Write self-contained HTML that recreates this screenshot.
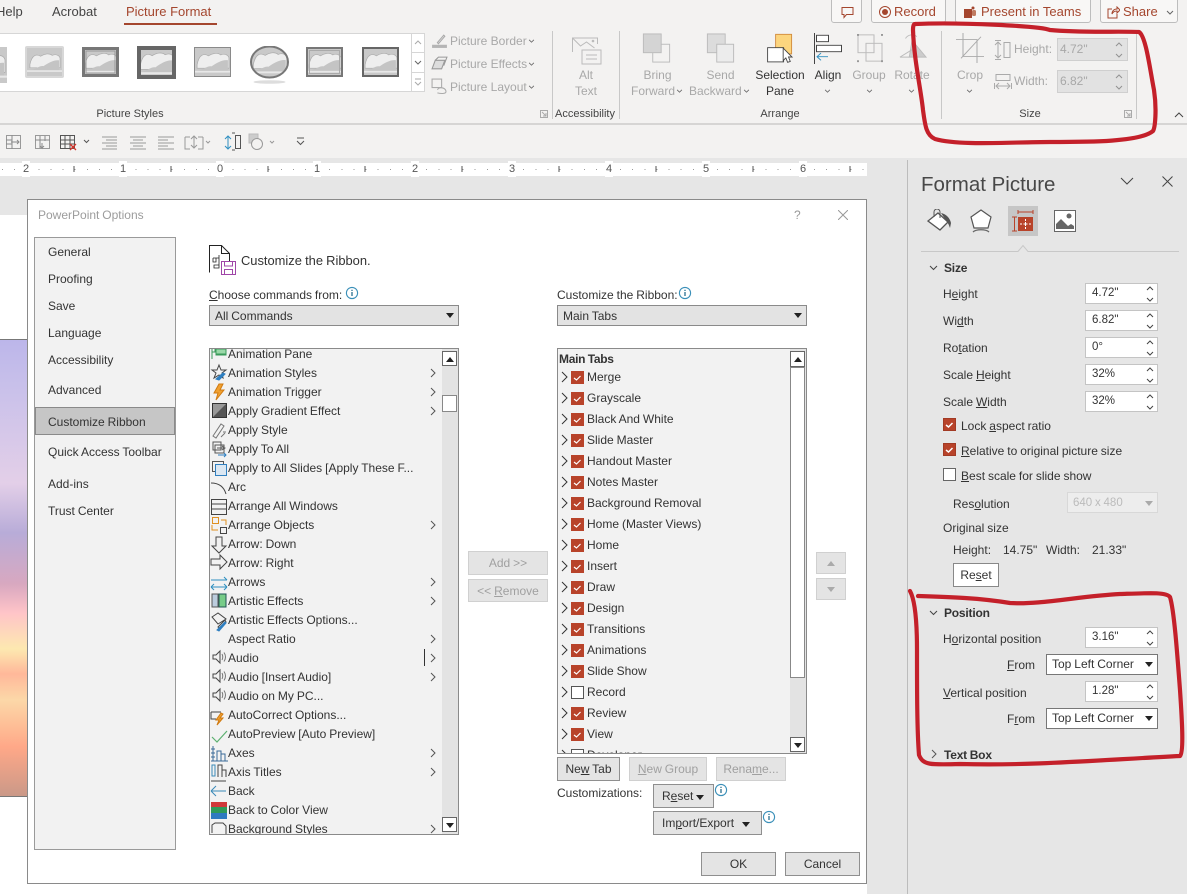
<!DOCTYPE html>
<html lang="en"><head><meta charset="utf-8"><title>Format Picture</title>
<style>
html,body{margin:0;padding:0;background:#e6e6e6}
#p{position:relative;width:1187px;height:894px;overflow:hidden;background:#e6e6e6;font:12px/16px "Liberation Sans",sans-serif;word-spacing:-.4px;color:#333}
#p div,#p svg.a{position:absolute}
.t{white-space:nowrap}
.g{color:#a8a8a8}
.c{text-align:center}
.btn{box-sizing:border-box;border:1px solid #8f8f8f;background:#e4e4e4;text-align:center;line-height:22px;white-space:nowrap}
.dis{box-sizing:border-box;border:1px solid #d0d0d0;background:#e4e4e4;color:#a0a0a0;text-align:center;line-height:22px;white-space:nowrap}
.top{box-sizing:border-box;border:1px solid #bdbdbd;border-radius:3px;background:#f8f7f6;color:#a4462e;font-size:13px;line-height:28px;white-space:nowrap;top:-3px;height:26px;word-spacing:0}
.inp{box-sizing:border-box;border:1px solid #c4c4c4;background:#fff;left:1085px;width:73px;height:21px;padding-left:6px;line-height:19px;font-size:11.5px}
.sel{box-sizing:border-box;border:1px solid #777;background:#fff;left:1046px;width:112px;height:21px;padding-left:5px;line-height:18px;font-size:12px;white-space:nowrap}
.ck{box-sizing:border-box;width:13px;height:13px;background:#b8432a;border:1px solid #a23a24}
.un{box-sizing:border-box;width:13px;height:13px;background:#fff;border:1px solid #666}
.sb{box-sizing:border-box;background:#fff;border:1px solid #666}
svg{display:block}
u{text-decoration-thickness:1px;text-underline-offset:1px}
</style></head><body>
<div id="p">
<svg width="0" height="0" style="position:absolute"><defs>
<symbol id="th" viewBox="0 0 36 34" preserveAspectRatio="none"><rect width="36" height="34" fill="#c9c9c9"/><path d="M3 20C5 8 10 7 14 10c4-3 9-4 12-1 4-2 7 0 8 3v12H3z" fill="#eee" stroke="#aaa" stroke-width=".7"/><path d="M3 27c6-1 10-6 14-5 5-4 11-8 16-7v12z" fill="#c4c4c4"/><rect y="27" width="36" height="2" fill="#e8e8e8"/></symbol>
<symbol id="chev" viewBox="0 0 6 10"><path d="M1 1l4 4-4 4" fill="none" stroke="#555" stroke-width="1"/></symbol>
<symbol id="dn" viewBox="0 0 8 5"><path d="M1 1l3 3 3-3" fill="none" stroke="#666" stroke-width="1"/></symbol>
<symbol id="tick" viewBox="0 0 13 13"><path d="M3 7l2.5 2 4-4" fill="none" stroke="#fff" stroke-width="1.5"/></symbol>
<symbol id="spin" viewBox="0 0 8 20"><path d="M1 6l3-3 3 3M1 14l3 3 3-3" fill="none" stroke="#444" stroke-width="1"/></symbol>
<symbol id="info" viewBox="0 0 14 14"><circle cx="7" cy="7" r="5.6" fill="#fff" stroke="#3a8fb8" stroke-width="1.1"/><path d="M7 6v4M7 3.8v1.2" stroke="#3a7a98" stroke-width="1.4"/></symbol>
<symbol id="tri" viewBox="0 0 8 5"><path d="M0 0h8L4 5z" fill="#222"/></symbol>
<symbol id="aud" viewBox="0 0 16 16"><path d="M1 6h3l4-4v12l-4-4H1z" fill="none" stroke="#444"/><path d="M10 5c1 2 1 4 0 6M12 3.500c2 3 2 6 0 9" fill="none" stroke="#777"/></symbol>
</defs></svg>

<!-- ribbon -->
<div style="left:0;top:0;width:1187px;height:123px;background:#f3f2f1"></div>
<div class="t" style="left:-4px;top:4px;font-size:13px;color:#444">Help</div>
<div class="t" style="left:52px;top:4px;font-size:13px;color:#444">Acrobat</div>
<div class="t" style="left:126px;top:4px;font-size:13px;color:#a4462e;word-spacing:0">Picture Format</div>
<div style="left:124px;top:23px;width:93px;height:2px;background:#a4462e"></div>

<div class="top" style="left:831px;width:31px"><svg class="a" style="left:8px;top:7px" width="15" height="15" viewBox="0 0 15 15"><path d="M2 2.500h11v7H6.500L4 12.500v-3H2z" fill="none" stroke="#a4462e"/></svg></div>
<div class="top" style="left:871px;width:75px;padding-left:22px"><svg class="a" style="left:6px;top:7px" width="14" height="14" viewBox="0 0 14 14"><circle cx="7" cy="7" r="5.500" fill="none" stroke="#a4462e"/><circle cx="7" cy="7" r="3" fill="#a4462e"/></svg>Record</div>
<div class="top" style="left:955px;width:136px;padding-left:25px"><svg class="a" style="left:7px;top:8px" width="14" height="14" viewBox="0 0 14 14"><rect x="1" y="3" width="8" height="9" fill="#a4462e"/><rect x="9" y="4" width="4" height="6" rx="1.500" fill="#c07a60"/><circle cx="10" cy="2" r="1.500" fill="#a4462e"/></svg>Present in Teams</div>
<div class="top" style="left:1100px;width:78px;padding-left:22px"><svg class="a" style="left:6px;top:8px" width="13" height="13" viewBox="0 0 13 13"><path d="M5 3H1v9h9V8M5 8c0-3 2-5 5-5V1l3 3-3 3V5c-2 0-4 1-5 3z" fill="none" stroke="#a4462e"/></svg>Share<svg class="a" style="left:65px;top:12px" width="8" height="5"><use href="#dn"/></svg></div>

<!-- gallery -->
<div style="left:-2px;top:33px;width:427px;height:59px;background:#fff;box-sizing:border-box;border:1px solid #d6d6d6"></div>
<div style="left:411px;top:33px;width:1px;height:59px;background:#d6d6d6"></div>
<div style="left:412px;top:52px;width:13px;height:1px;background:#d6d6d6"></div>
<div style="left:412px;top:72px;width:13px;height:1px;background:#d6d6d6"></div>
<svg class="a" style="left:414px;top:40px" width="8" height="5"><path d="M1 4l3-3 3 3" fill="none" stroke="#aaa"/></svg>
<svg class="a" style="left:414px;top:60px" width="8" height="5"><use href="#dn"/></svg>
<svg class="a" style="left:414px;top:78px" width="8" height="8"><path d="M1 1h6M1 4l3 3 3-3" fill="none" stroke="#aaa"/></svg>
<svg class="a" style="left:-2px;top:47px" width="9" height="36"><use href="#th" width="36" height="36" x="-27"/></svg>
<svg class="a" style="left:25px;top:46px" width="39" height="32"><rect width="39" height="32" rx="2" fill="#d8d8d8"/><use href="#th" width="35" height="28" x="2" y="2"/></svg>
<svg class="a" style="left:82px;top:47px" width="37" height="30"><use href="#th" width="37" height="30"/><rect x="1.500" y="1.500" width="34" height="27" fill="none" stroke="#777" stroke-width="3"/><rect x="4" y="4" width="29" height="22" fill="none" stroke="#999"/></svg>
<svg class="a" style="left:137px;top:46px" width="39" height="33"><use href="#th" width="39" height="33"/><rect x="2" y="2" width="35" height="29" fill="none" stroke="#666" stroke-width="4"/></svg>
<svg class="a" style="left:194px;top:47px" width="37" height="30"><use href="#th" width="37" height="30"/><rect x=".5" y=".5" width="36" height="29" fill="none" stroke="#8a8a8a"/></svg>
<svg class="a" style="left:250px;top:46px" width="39" height="38"><defs><clipPath id="el"><ellipse cx="19.500" cy="16" rx="18.500" ry="15.500"/></clipPath></defs><ellipse cx="19.500" cy="36" rx="16" ry="1.800" fill="#ddd"/><g clip-path="url(#el)"><use href="#th" width="39" height="32"/></g><ellipse cx="19.500" cy="16" rx="18.500" ry="15.500" fill="none" stroke="#777" stroke-width="2"/></svg>
<svg class="a" style="left:306px;top:47px" width="37" height="30"><use href="#th" width="37" height="30"/><rect x="1" y="1" width="35" height="28" fill="none" stroke="#777" stroke-width="2"/><rect x="3.500" y="3.500" width="30" height="23" fill="none" stroke="#aaa"/></svg>
<svg class="a" style="left:362px;top:47px" width="37" height="30"><use href="#th" width="37" height="30"/><rect x="1" y="1" width="35" height="28" fill="none" stroke="#666" stroke-width="2"/></svg>

<svg class="a" style="left:431px;top:32px" width="17" height="17" viewBox="0 0 16 16"><path d="M6 10l6-7 1 1-6 7z" fill="none" stroke="#aaa"/><rect x="1" y="12" width="14" height="3" fill="#b5b5b5"/></svg>
<svg class="a" style="left:431px;top:55px" width="17" height="17" viewBox="0 0 16 16"><path d="M4 5h9l-3 8H1z" fill="#ddd" stroke="#999"/><path d="M4 5l3-3h8l-3 8" fill="none" stroke="#999"/></svg>
<svg class="a" style="left:431px;top:78px" width="17" height="17" viewBox="0 0 16 16"><rect x="1" y="1" width="9" height="8" fill="none" stroke="#aaa"/><path d="M6 11c2-3 7-2 8 1s-4 3-8 2" fill="none" stroke="#aaa"/></svg>
<div class="t g" style="left:450px;top:33px;font-size:12px;word-spacing:0">Picture Border</div>
<div class="t g" style="left:450px;top:56px;font-size:12px;word-spacing:0">Picture Effects</div>
<div class="t g" style="left:450px;top:79px;font-size:12px;word-spacing:0">Picture Layout</div>
<svg class="a" style="left:528px;top:39px" width="7" height="4"><use href="#dn"/></svg>
<svg class="a" style="left:528px;top:62px" width="7" height="4"><use href="#dn"/></svg>
<svg class="a" style="left:528px;top:85px" width="7" height="4"><use href="#dn"/></svg>
<div class="t c" style="left:30px;top:106px;width:200px;font-size:11px;color:#444;word-spacing:0">Picture Styles</div>
<svg class="a" style="left:540px;top:110px" width="8" height="8"><rect x=".5" y=".5" width="7" height="7" fill="none" stroke="#aaa"/><path d="M2 2l4 4M6 3v3H3" fill="none" stroke="#aaa"/></svg>
<div style="left:552px;top:31px;width:1px;height:88px;background:#c8c8c8"></div>

<svg class="a" style="left:572px;top:36px" width="30" height="30" viewBox="0 0 30 30"><path d="M.5 16V2h25v6M.5 2l8 8 6-4 8 6" fill="none" stroke="#bbb"/><circle cx="21" cy="5" r="1.300" fill="#bbb"/><rect x="10" y="14" width="19" height="14" fill="none" stroke="#bbb"/><path d="M14 19h11M14 23h11" stroke="#bbb"/></svg>
<div class="t g c" style="left:566px;top:67px;width:40px;font-size:12px">Alt</div>
<div class="t g c" style="left:566px;top:83px;width:40px;font-size:12px">Text</div>
<div class="t c" style="left:554px;top:106px;width:62px;font-size:11px;color:#444">Accessibility</div>
<div style="left:619px;top:31px;width:1px;height:88px;background:#c8c8c8"></div>

<svg class="a" style="left:642px;top:33px" width="29" height="30" viewBox="0 0 30 32"><rect x="11" y="12" width="18" height="19" fill="#f3f2f1" stroke="#bbb"/><rect x="1" y="1" width="19" height="20" fill="#d4d4d4" stroke="#bbb"/></svg>
<div class="t g c" style="left:630px;top:67px;width:55px;font-size:12px">Bring</div>
<div class="t g" style="left:631px;top:83px;font-size:12px">Forward</div>
<svg class="a" style="left:676px;top:89px" width="7" height="4"><use href="#dn"/></svg>
<svg class="a" style="left:706px;top:33px" width="29" height="30" viewBox="0 0 30 32"><rect x="1" y="1" width="19" height="20" fill="#dcdcdc" stroke="#bbb"/><rect x="11" y="12" width="18" height="19" fill="#ececec" stroke="#bbb"/></svg>
<div class="t g c" style="left:693px;top:67px;width:55px;font-size:12px">Send</div>
<div class="t g" style="left:689px;top:83px;font-size:12px">Backward</div>
<svg class="a" style="left:743px;top:89px" width="7" height="4"><use href="#dn"/></svg>
<svg class="a" style="left:765px;top:33px" width="31" height="32" viewBox="0 0 32 36"><rect x="10.500" y="1.500" width="18" height="22" fill="#fcd57e" stroke="#d08a3c"/><rect x="1.500" y="16.500" width="18" height="16" fill="#fff" stroke="#444"/><path d="M19 17v14l3-3 2 5 3-1-2-5h4z" fill="#fff" stroke="#444"/></svg>
<div class="t c" style="left:752px;top:67px;width:56px;font-size:12px">Selection</div>
<div class="t c" style="left:752px;top:83px;width:56px;font-size:12px">Pane</div>
<svg class="a" style="left:814px;top:33px" width="28" height="31" viewBox="0 0 28 34" preserveAspectRatio="none"><path d="M.5 0v34" stroke="#444"/><rect x="2.500" y="2.500" width="12" height="7" fill="#fff" stroke="#444"/><rect x="2.500" y="13.500" width="25" height="7" fill="#fff" stroke="#444"/><path d="M14 26H3m4-4l-4 4 4 4" fill="none" stroke="#2f8fc0"/></svg>
<div class="t c" style="left:810px;top:67px;width:36px;font-size:12px">Align</div>
<svg class="a" style="left:824px;top:89px" width="7" height="4"><use href="#dn"/></svg>
<svg class="a" style="left:856px;top:33px" width="28" height="30" viewBox="0 0 28 32" preserveAspectRatio="none"><rect x="2" y="2" width="16" height="19" fill="none" stroke="#bbb"/><rect x="10" y="11" width="16" height="19" fill="none" stroke="#bbb"/><path d="M1 1h2v2H1zM25 1h2v2h-2zM1 29h2v2H1zM25 29h2v2h-2z" fill="#999"/></svg>
<div class="t g c" style="left:849px;top:67px;width:40px;font-size:12px">Group</div>
<svg class="a" style="left:866px;top:89px" width="7" height="4"><use href="#dn"/></svg>
<svg class="a" style="left:897px;top:31px" width="32" height="28" viewBox="0 0 32 30"><path d="M15 10l15 18H12z" fill="#ccc" stroke="#bbb"/><path d="M2 28l13-8M8 8a8 8 0 0 1 12-2M2 28h10" fill="none" stroke="#bbb"/></svg>
<div class="t g c" style="left:891px;top:67px;width:42px;font-size:12px">Rotate</div>
<svg class="a" style="left:908px;top:89px" width="7" height="4"><use href="#dn"/></svg>
<div class="t c" style="left:750px;top:106px;width:60px;font-size:11px;color:#444">Arrange</div>
<div style="left:941px;top:31px;width:1px;height:88px;background:#c8c8c8"></div>

<svg class="a" style="left:956px;top:33px" width="28" height="30" viewBox="0 0 28 32" preserveAspectRatio="none"><path d="M7 0v25h21M0 7h21v25M5 27L25 4" fill="none" stroke="#aaa"/></svg>
<div class="t g c" style="left:950px;top:67px;width:40px;font-size:12px">Crop</div>
<svg class="a" style="left:966px;top:89px" width="7" height="4"><use href="#dn"/></svg>
<svg class="a" style="left:994px;top:40px" width="18" height="20" viewBox="0 0 18 20"><path d="M4 2v16M1 5l3-3 3 3M1 15l3 3 3-3M1 .5h6M1 19.500h6" fill="none" stroke="#aaa"/><rect x="10" y="2.500" width="6" height="15" fill="none" stroke="#aaa"/></svg>
<svg class="a" style="left:994px;top:73px" width="18" height="18" viewBox="0 0 18 18"><rect x="2" y="1.500" width="14" height="6" fill="none" stroke="#aaa"/><path d="M2 13h14M5 10l-3 3 3 3M13 10l3 3-3 3M.5 10v6M17.500 10v6" fill="none" stroke="#aaa"/></svg>
<div class="t g" style="left:1014px;top:41px;font-size:12px">Height:</div>
<div class="t g" style="left:1014px;top:73px;font-size:12px">Width:</div>
<div style="left:1057px;top:38px;width:71px;height:23px;background:#e2e2e2;box-sizing:border-box;border:1px solid #cfcfcf"></div>
<div style="left:1057px;top:70px;width:71px;height:23px;background:#e2e2e2;box-sizing:border-box;border:1px solid #cfcfcf"></div>
<div class="t g" style="left:1060px;top:41px;font-size:12px">4.72"</div>
<div class="t g" style="left:1060px;top:73px;font-size:12px">6.82"</div>
<svg class="a" style="left:1115px;top:40px;opacity:.5" width="8" height="20"><use href="#spin"/></svg>
<svg class="a" style="left:1115px;top:72px;opacity:.5" width="8" height="20"><use href="#spin"/></svg>
<div class="t c" style="left:1000px;top:106px;width:60px;font-size:11px;color:#444">Size</div>
<svg class="a" style="left:1124px;top:110px" width="8" height="8"><rect x=".5" y=".5" width="7" height="7" fill="none" stroke="#aaa"/><path d="M2 2l4 4M6 3v3H3" fill="none" stroke="#aaa"/></svg>
<div style="left:1136px;top:31px;width:1px;height:88px;background:#c8c8c8"></div>
<svg class="a" style="left:1174px;top:112px" width="10" height="6"><path d="M1 5l4-4 4 4" fill="none" stroke="#444"/></svg>
<div style="left:0;top:123px;width:1187px;height:2px;background:#d6d5d4"></div>

<!-- QAT -->
<div style="left:0;top:125px;width:1187px;height:33px;background:#f3f2f1"></div>
<svg class="a" style="left:0;top:132px" width="310" height="20" viewBox="0 0 310 20" fill="none" stroke="#999">
<rect x="6.500" y="3.500" width="14" height="13"/><path d="M6 8h6M6 12h6M12 3v14M11 10h8m-2-2l2 2-2 2" stroke="#8a8a8a"/>
<rect x="35.500" y="3.500" width="14" height="13"/><path d="M35 8h15M40 4v12M45 4v5M42 11v5l-2-2m2 2l2-2" stroke="#8a8a8a"/>
<rect x="60.500" y="3.500" width="14" height="13" stroke="#555"/><path d="M60 8h15M60 12h15M65 4v12M70 4v12" stroke="#555"/><path d="M70 12l6 6m0-6l-6 6" stroke="#d4342a" stroke-width="1.300"/>
<path d="M84 8l2.500 2.500L89 8" stroke="#555"/>
<path d="M102 5h15M106 8h11M102 11h15M106 14h11M102 17h15"/>
<path d="M130 5h16M133 8h10M130 11h16M133 14h10M130 17h16"/>
<path d="M158 5h16M158 8h10M158 11h16M158 14h10M158 17h16"/>
<path d="M185 5h5M198 5h5M185 5v12h5M198 17h5V5M194 4v12M191 7l3-3 3 3M191 13l3 3 3-3M206 9l2 2 2-2"/>
<path d="M228 4v13M225 7l3-3 3 3M225 14l3 3 3-3" stroke="#2f8fc0"/><rect x="235.500" y="3.500" width="5" height="13" stroke="#555"/><path d="M232 1h3M232 18h3" stroke="#555"/>
<rect x="249" y="2" width="9" height="9" fill="#ccc" stroke="#bbb"/><circle cx="257" cy="12" r="5.500" fill="#f3f2f1"/><path d="M270 9l2 2 2-2"/>
<path d="M297 6h7M297 9l3.500 3.500L304 9" stroke="#555"/>
</svg>
<div style="left:0;top:158px;width:1187px;height:5px;background:#e6e6e6"></div>

<!-- ruler -->
<div style="left:0;top:163px;width:867px;height:13px;background:#fff"></div>
<div style="left:0;top:169px;width:867px;height:1px;background:repeating-linear-gradient(90deg,#999 0 1px,transparent 1px 12.12px);background-position:2px 0"></div>
<div class="t" style="left:22px;top:161px;font-size:11px;background:#fff;padding:0 1px;color:#555">2</div>
<div class="t" style="left:119px;top:161px;font-size:11px;background:#fff;padding:0 1px;color:#555">1</div>
<div class="t" style="left:216px;top:161px;font-size:11px;background:#fff;padding:0 1px;color:#555">0</div>
<div class="t" style="left:313px;top:161px;font-size:11px;background:#fff;padding:0 1px;color:#555">1</div>
<div class="t" style="left:411px;top:161px;font-size:11px;background:#fff;padding:0 1px;color:#555">2</div>
<div class="t" style="left:508px;top:161px;font-size:11px;background:#fff;padding:0 1px;color:#555">3</div>
<div class="t" style="left:605px;top:161px;font-size:11px;background:#fff;padding:0 1px;color:#555">4</div>
<div class="t" style="left:702px;top:161px;font-size:11px;background:#fff;padding:0 1px;color:#555">5</div>
<div class="t" style="left:799px;top:161px;font-size:11px;background:#fff;padding:0 1px;color:#555">6</div>
<svg class="a" style="left:0;top:166px" width="867" height="7"><path d="M74 0v6M171 0v6M268 0v6M365 0v6M462 0v6M559 0v6M656 0v6M753 0v6M850 0v6" stroke="#555"/></svg>

<!-- slide -->
<div style="left:0;top:215px;width:867px;height:679px;background:#fff"></div>
<div style="left:0;top:339px;width:30px;height:458px;box-sizing:border-box;border-top:1px solid #777;border-bottom:1px solid #777;background:linear-gradient(180deg,#bcb6ea 0,#c8c0ea 45px,#e3cfe8 143px,#b8acd8 193px,#d8a8c0 244px,#ffc4c8 273px,#fde8b0 309px,#ffb89a 334px,#fcd8a8 360px,#ffa888 407px,#c89888 458px)"></div>

<!-- dialog -->
<div style="left:27px;top:199px;width:840px;height:685px;box-sizing:border-box;background:#fff;border:1px solid #8a8a8a"></div>
<div class="t" style="left:38px;top:207px;color:#9c9c9c;font-size:12px">PowerPoint Options</div>
<div class="t" style="left:794px;top:207px;color:#999;font-size:12px">?</div>
<svg class="a" style="left:838px;top:210px" width="10" height="10"><path d="M0 0l10 10M10 0L0 10" stroke="#999"/></svg>

<div style="left:34px;top:237px;width:142px;height:613px;box-sizing:border-box;background:#f2f2f2;border:1px solid #9a9a9a"></div>
<div style="left:35px;top:407px;width:140px;height:28px;background:#c6c6c6;box-sizing:border-box;border:1px solid #8a8a8a"></div>
<div class="t" style="left:48px;top:244px">General</div>
<div class="t" style="left:48px;top:271px">Proofing</div>
<div class="t" style="left:48px;top:298px">Save</div>
<div class="t" style="left:48px;top:325px">Language</div>
<div class="t" style="left:48px;top:352px">Accessibility</div>
<div class="t" style="left:48px;top:382px">Advanced</div>
<div class="t" style="left:48px;top:414px">Customize Ribbon</div>
<div class="t" style="left:48px;top:444px">Quick Access Toolbar</div>
<div class="t" style="left:48px;top:476px">Add-ins</div>
<div class="t" style="left:48px;top:503px">Trust Center</div>

<svg class="a" style="left:209px;top:245px" width="28" height="31" viewBox="0 0 28 31"><path d="M.5 27.500V.5h12l8 8v8M12.500.5v8h8" fill="none" stroke="#222"/><path d="M10 10v13M4 13h6M4 13v4h3v-4M5 20h5v3H5z" fill="none" stroke="#222" stroke-width=".8"/><rect x="12.500" y="16.500" width="14" height="13" fill="#fff" stroke="#a046a8"/><path d="M15.500 17v4h8v-4M15.500 29.500v-5h8v5" fill="none" stroke="#a046a8"/></svg>
<div class="t" style="left:241px;top:253px;font-size:12.9px">Customize the Ribbon.</div>

<div class="t" style="left:209px;top:287px"><u>C</u>hoose commands from:</div>
<svg class="a" style="left:345px;top:286px" width="14" height="14"><use href="#info"/></svg>
<div style="left:209px;top:305px;width:250px;height:21px;box-sizing:border-box;background:#e3e3e3;border:1px solid #8a8a8a"></div>
<div class="t" style="left:215px;top:308px">All Commands</div>
<svg class="a" style="left:446px;top:313px" width="8" height="5"><use href="#tri"/></svg>

<div class="t" style="left:557px;top:287px">Customize the Ribbon:</div>
<svg class="a" style="left:678px;top:286px" width="14" height="14"><use href="#info"/></svg>
<div style="left:557px;top:305px;width:250px;height:21px;box-sizing:border-box;background:#e3e3e3;border:1px solid #8a8a8a"></div>
<div class="t" style="left:563px;top:308px">Main Tabs</div>
<svg class="a" style="left:794px;top:313px" width="8" height="5"><use href="#tri"/></svg>

<!-- left list -->
<div style="left:209px;top:348px;width:250px;height:487px;box-sizing:border-box;background:#f2f2f2;border:1px solid #8a8a8a;overflow:hidden">
<div style="left:232px;top:0;width:16px;height:485px;background:#e3e3e3"></div>
<div class="t" style="left:18px;top:-3px">Animation Pane</div>
<div class="t" style="left:18px;top:16px">Animation Styles</div>
<div class="t" style="left:18px;top:35px">Animation Trigger</div>
<div class="t" style="left:18px;top:54px">Apply Gradient Effect</div>
<div class="t" style="left:18px;top:73px">Apply Style</div>
<div class="t" style="left:18px;top:92px">Apply To All</div>
<div class="t" style="left:18px;top:111px">Apply to All Slides [Apply These F...</div>
<div class="t" style="left:18px;top:130px">Arc</div>
<div class="t" style="left:18px;top:149px">Arrange All Windows</div>
<div class="t" style="left:18px;top:168px">Arrange Objects</div>
<div class="t" style="left:18px;top:187px">Arrow: Down</div>
<div class="t" style="left:18px;top:206px">Arrow: Right</div>
<div class="t" style="left:18px;top:225px">Arrows</div>
<div class="t" style="left:18px;top:244px">Artistic Effects</div>
<div class="t" style="left:18px;top:263px">Artistic Effects Options...</div>
<div class="t" style="left:18px;top:282px">Aspect Ratio</div>
<div class="t" style="left:18px;top:301px">Audio</div>
<div class="t" style="left:18px;top:320px">Audio [Insert Audio]</div>
<div class="t" style="left:18px;top:339px">Audio on My PC...</div>
<div class="t" style="left:18px;top:358px">AutoCorrect Options...</div>
<div class="t" style="left:18px;top:377px">AutoPreview [Auto Preview]</div>
<div class="t" style="left:18px;top:396px">Axes</div>
<div class="t" style="left:18px;top:415px">Axis Titles</div>
<div class="t" style="left:18px;top:434px">Back</div>
<div class="t" style="left:18px;top:453px">Back to Color View</div>
<div class="t" style="left:18px;top:472px">Background Styles</div>

<svg class="a" style="left:0;top:0" width="18" height="486" viewBox="0 0 18 486" fill="none" stroke="#444">
<path d="M2 0v10M2 3h3v-3M6 1h10v5H6z" stroke="#3a9a5a"/><rect x="6" y="0" width="10" height="5" fill="#9ad8a8" stroke="#3a9a5a"/>
<path d="M9 16l2 5h5l-4 3 1 5-4-3-5 3 2-5-4-3h5z"/><path d="M6 30l7-6 2 1-6 6z" fill="#2f7fc0" stroke="#2f7fc0"/>
<path d="M9 35l-5 9h4l-2 7 8-10h-4l3-6z" fill="#f0a030" stroke="#d07a10"/>
<rect x="2.500" y="54.500" width="14" height="14" fill="#999" stroke="#333"/><path d="M3 68L16 55v13z" fill="#555" stroke="none"/>
<path d="M3 87l8-12 3 2-8 12zM13 83l3 0M11 88l4-4" stroke="#777"/>
<path d="M3 93h8v8H3zM5 96h9v8H5zM7 99h8M12 97l3 2-3 2" stroke="#555"/><path d="M8 106h8m-2-2l2 2-2 2" stroke="#2f7fc0"/>
<rect x="2.500" y="112.500" width="11" height="10" stroke="#555"/><rect x="5.500" y="115.500" width="11" height="11" fill="#dbe7f2" stroke="#2f7fc0"/>
<path d="M1 134c8 0 13 4 15 11"/>
<rect x="1.500" y="150.500" width="15" height="15"/><path d="M1 155h16M1 160h16"/>
<rect x="2.500" y="168.500" width="6" height="6" stroke="#e09020"/><rect x="10.500" y="178.500" width="6" height="6"/><path d="M11 171h5v5M8 181H2v-5" stroke="#e09020"/>
<path d="M6 188v9H2l7 7 7-7h-4v-9z"/>
<path d="M1 210h9v-4l7 7-7 7v-4H1z"/>
<path d="M1 231h16m-3-3l3 3M1 238h16M1 238l3-3m0 6l-3-3m16 0l-3-3m0 6l3-3" stroke="#2f8fc0"/>
<rect x="2" y="245" width="6" height="13" fill="#bcd" stroke="#555"/><rect x="9" y="245" width="7" height="13" fill="#7c8" stroke="#255"/>
<path d="M2 268l6-4 8 6-8 5zM8 278l7-7 1 2-6 7z" stroke="#444"/><path d="M7 281l8-8 1 1-7 8z" fill="#2f7fc0" stroke="#2f7fc0"/>
<path d="M1 363h10M1 363v7h5"/><path d="M11 364l-5 7h3l-2 5 6-7h-3l3-4z" fill="#f0a030" stroke="#d07a10"/>
<path d="M2 388l5 5 10-11" stroke="#5cb070" stroke-width="1.200"/>
<path d="M3 397v15M1 400h4M1 404h4M1 408h4M1 412h17M7 412v-10h4v10M11 412v-7h4v7" stroke="#3a6a98"/>
<rect x="2" y="416" width="3" height="11" stroke="#3a8ab8"/><path d="M8 428v-12h4v12M12 428v-7h4v7M1 432h15" stroke="#444"/>
<path d="M1 442h15M1 442l5-5M1 442l5 5" stroke="#3a8ab8"/>
<rect x="1" y="453" width="16" height="5" fill="#d0383a" stroke="none"/><rect x="1" y="458" width="16" height="6" fill="#2f9a5a" stroke="none"/><rect x="1" y="464" width="16" height="6" fill="#2f7ac0" stroke="none"/>
<path d="M2 484v-8l3-2h8l3 3v9"/>
</svg>
<svg class="a" style="left:2px;top:300px" width="16" height="16"><use href="#aud"/></svg>
<svg class="a" style="left:2px;top:319px" width="16" height="16"><use href="#aud"/></svg>
<svg class="a" style="left:2px;top:338px" width="16" height="16"><use href="#aud"/></svg>
<svg class="a" style="left:220px;top:19px" width="6" height="10"><use href="#chev"/></svg>
<svg class="a" style="left:220px;top:38px" width="6" height="10"><use href="#chev"/></svg>
<svg class="a" style="left:220px;top:57px" width="6" height="10"><use href="#chev"/></svg>
<svg class="a" style="left:220px;top:171px" width="6" height="10"><use href="#chev"/></svg>
<svg class="a" style="left:220px;top:228px" width="6" height="10"><use href="#chev"/></svg>
<svg class="a" style="left:220px;top:247px" width="6" height="10"><use href="#chev"/></svg>
<svg class="a" style="left:220px;top:285px" width="6" height="10"><use href="#chev"/></svg>
<svg class="a" style="left:220px;top:304px" width="6" height="10"><use href="#chev"/></svg>
<svg class="a" style="left:220px;top:323px" width="6" height="10"><use href="#chev"/></svg>
<svg class="a" style="left:220px;top:399px" width="6" height="10"><use href="#chev"/></svg>
<svg class="a" style="left:220px;top:418px" width="6" height="10"><use href="#chev"/></svg>
<svg class="a" style="left:220px;top:475px" width="6" height="10"><use href="#chev"/></svg>
<div style="left:214px;top:300px;width:1px;height:17px;background:#333"></div>
<div class="sb" style="left:232px;top:2px;width:15px;height:15px"><svg class="a" style="left:3px;top:5px" width="8" height="5"><path d="M0 5h8L4 0z" fill="#222"/></svg></div>
<div style="left:232px;top:46px;width:15px;height:17px;box-sizing:border-box;background:#fff;border:1px solid #888"></div>
<div class="sb" style="left:232px;top:468px;width:15px;height:15px"><svg class="a" style="left:3px;top:5px" width="8" height="5"><use href="#tri"/></svg></div>
</div>

<!-- add / remove -->
<div class="dis" style="left:468px;top:551px;width:80px;height:24px">Add &gt;&gt;</div>
<div class="dis" style="left:468px;top:579px;width:80px;height:23px">&lt;&lt; <u>R</u>emove</div>
<div class="dis" style="left:816px;top:552px;width:30px;height:22px"><svg class="a" style="left:10px;top:8px" width="8" height="5"><path d="M0 5h8L4 0z" fill="#aaa"/></svg></div>
<div class="dis" style="left:816px;top:578px;width:30px;height:22px"><svg class="a" style="left:10px;top:8px" width="8" height="5"><path d="M0 0h8L4 5z" fill="#aaa"/></svg></div>

<!-- right list -->
<div style="left:557px;top:348px;width:250px;height:406px;box-sizing:border-box;background:#f2f2f2;border:1px solid #8a8a8a;overflow:hidden">
<div class="t" style="left:1px;top:2px;font-weight:bold;letter-spacing:-.3px">Main Tabs</div>
<div class="t" style="left:29px;top:20px">Merge</div>
<div class="t" style="left:29px;top:41px">Grayscale</div>
<div class="t" style="left:29px;top:62px">Black And White</div>
<div class="t" style="left:29px;top:83px">Slide Master</div>
<div class="t" style="left:29px;top:104px">Handout Master</div>
<div class="t" style="left:29px;top:125px">Notes Master</div>
<div class="t" style="left:29px;top:146px">Background Removal</div>
<div class="t" style="left:29px;top:167px">Home (Master Views)</div>
<div class="t" style="left:29px;top:188px">Home</div>
<div class="t" style="left:29px;top:209px">Insert</div>
<div class="t" style="left:29px;top:230px">Draw</div>
<div class="t" style="left:29px;top:251px">Design</div>
<div class="t" style="left:29px;top:272px">Transitions</div>
<div class="t" style="left:29px;top:293px">Animations</div>
<div class="t" style="left:29px;top:314px">Slide Show</div>
<div class="t" style="left:29px;top:335px">Record</div>
<div class="t" style="left:29px;top:356px">Review</div>
<div class="t" style="left:29px;top:377px">View</div>
<div class="t" style="left:29px;top:398px">Developer</div>
<svg class="a" style="left:0;top:0" width="30" height="404" viewBox="0 0 30 404">
<path d="M4 23l5 5-5 5M4 44l5 5-5 5M4 65l5 5-5 5M4 86l5 5-5 5M4 107l5 5-5 5M4 128l5 5-5 5M4 149l5 5-5 5M4 170l5 5-5 5M4 191l5 5-5 5M4 212l5 5-5 5M4 233l5 5-5 5M4 254l5 5-5 5M4 275l5 5-5 5M4 296l5 5-5 5M4 317l5 5-5 5M4 338l5 5-5 5M4 359l5 5-5 5M4 380l5 5-5 5M4 401l5 5-5 5" fill="none" stroke="#333"/>
<g id="cks" fill="#b8432a"><rect x="13" y="22" width="13" height="13"/><rect x="13" y="43" width="13" height="13"/><rect x="13" y="64" width="13" height="13"/><rect x="13" y="85" width="13" height="13"/><rect x="13" y="106" width="13" height="13"/><rect x="13" y="127" width="13" height="13"/><rect x="13" y="148" width="13" height="13"/><rect x="13" y="169" width="13" height="13"/><rect x="13" y="190" width="13" height="13"/><rect x="13" y="211" width="13" height="13"/><rect x="13" y="232" width="13" height="13"/><rect x="13" y="253" width="13" height="13"/><rect x="13" y="274" width="13" height="13"/><rect x="13" y="295" width="13" height="13"/><rect x="13" y="316" width="13" height="13"/><rect x="13" y="358" width="13" height="13"/><rect x="13" y="379" width="13" height="13"/></g>
<rect x="13.500" y="337.500" width="12" height="12" fill="#fff" stroke="#555"/><rect x="13.500" y="400.500" width="12" height="12" fill="#fff" stroke="#555"/>
<path d="M16 29l2.500 2 4-4M16 50l2.500 2 4-4M16 71l2.500 2 4-4M16 92l2.500 2 4-4M16 113l2.500 2 4-4M16 134l2.500 2 4-4M16 155l2.500 2 4-4M16 176l2.500 2 4-4M16 197l2.500 2 4-4M16 218l2.500 2 4-4M16 239l2.500 2 4-4M16 260l2.500 2 4-4M16 281l2.500 2 4-4M16 302l2.500 2 4-4M16 323l2.500 2 4-4M16 365l2.500 2 4-4M16 386l2.500 2 4-4" fill="none" stroke="#fff" stroke-width="1.200"/>
</svg>
<div style="left:232px;top:0;width:16px;height:404px;background:#e3e3e3"></div>
<div class="sb" style="left:232px;top:2px;width:15px;height:16px"><svg class="a" style="left:3px;top:5px" width="8" height="5"><path d="M0 5h8L4 0z" fill="#222"/></svg></div>
<div style="left:232px;top:18px;width:15px;height:311px;box-sizing:border-box;background:#fff;border:1px solid #888"></div>
<div class="sb" style="left:232px;top:388px;width:15px;height:15px"><svg class="a" style="left:3px;top:5px" width="8" height="5"><use href="#tri"/></svg></div>
</div>

<div class="btn" style="left:557px;top:757px;width:63px;height:24px">Ne<u>w</u> Tab</div>
<div class="dis" style="left:629px;top:757px;width:78px;height:24px"><u>N</u>ew Group</div>
<div class="dis" style="left:716px;top:757px;width:70px;height:24px">Rena<u>m</u>e...</div>
<div class="t" style="left:557px;top:785px">Customizations:</div>
<div class="btn" style="left:653px;top:784px;width:61px;height:24px;text-align:left;padding-left:8px;line-height:23px">R<u>e</u>set<svg class="a" style="left:42px;top:10px" width="8" height="5"><use href="#tri"/></svg></div>
<svg class="a" style="left:714px;top:783px" width="14" height="14"><use href="#info"/></svg>
<div class="btn" style="left:653px;top:811px;width:109px;height:24px;text-align:left;padding-left:8px;line-height:23px">Im<u>p</u>ort/Export<svg class="a" style="left:88px;top:10px" width="8" height="5"><use href="#tri"/></svg></div>
<svg class="a" style="left:762px;top:810px" width="14" height="14"><use href="#info"/></svg>
<div class="btn" style="left:701px;top:852px;width:75px;height:24px">OK</div>
<div class="btn" style="left:785px;top:852px;width:75px;height:24px">Cancel</div>

<!-- panel -->
<div style="left:907px;top:160px;width:280px;height:734px;background:#e6e6e6;box-sizing:border-box;border-left:1px solid #bcbcbc"></div>
<div class="t" style="left:921px;top:172px;font-size:20.5px;line-height:26px;color:#484848;word-spacing:0">Format Picture</div>
<svg class="a" style="left:1120px;top:177px" width="14" height="8"><path d="M1 1l6 6 6-6" fill="none" stroke="#444"/></svg>
<svg class="a" style="left:1162px;top:176px" width="11" height="11"><path d="M.5.5l10 10M10.500.5l-10 10" stroke="#444"/></svg>
<svg class="a" style="left:927px;top:209px" width="26" height="24" viewBox="0 0 26 24"><path d="M11 4l10 9-8 8L1 12z" fill="#fff" stroke="#555" stroke-width="1.300"/><path d="M7 8V3a3 3 0 0 1 6 0v6" fill="none" stroke="#555"/><path d="M14 4c5 1 9 5 10 10l-1 5c-1-3-2-5-3-6z" fill="#555"/></svg>
<svg class="a" style="left:970px;top:209px" width="22" height="24" viewBox="0 0 22 24"><path d="M11 1l10 7-3 11H4L1 8z" fill="#fff" stroke="#555" stroke-width="1.200"/><path d="M3 23c3-3 13-3 16 0" fill="none" stroke="#666" stroke-width="1.300"/></svg>
<div style="left:1008px;top:206px;width:30px;height:30px;background:#c6c6c6"></div>
<svg class="a" style="left:1012px;top:209px" width="24" height="25" viewBox="0 0 24 25"><path d="M6 3h15M6 1v4M21 1v4M0 8h5M0 22h5M2.500 8v14" fill="none" stroke="#b8432a"/><rect x="6" y="8" width="15" height="14" fill="#b8432a"/><path d="M13.500 10v2M13.500 18v2M8 15h2M17 15h2M11.500 15h4M13.500 13v4" stroke="#fff"/></svg>
<svg class="a" style="left:1054px;top:210px" width="22" height="22" viewBox="0 0 22 22"><rect x=".5" y=".5" width="21" height="21" fill="#fff" stroke="#666"/><path d="M2 19v-5l5-5 7 7 3-2 3 2v3z" fill="#666"/><circle cx="15" cy="6" r="2.500" fill="#666"/></svg>
<svg class="a" style="left:921px;top:244px" width="258" height="9"><path d="M0 7.500h97l5-6 5 6h151" fill="none" stroke="#c8c8c8"/></svg>

<svg class="a" style="left:929px;top:265px" width="9" height="6"><path d="M1 1l3.500 3.500L8 1" fill="none" stroke="#444"/></svg>
<div class="t" style="left:944px;top:260px;font-weight:bold;letter-spacing:-.2px">Size</div>
<div class="t" style="left:943px;top:286px">H<u>e</u>ight</div>
<div class="t" style="left:943px;top:313px">Wi<u>d</u>th</div>
<div class="t" style="left:943px;top:340px">Ro<u>t</u>ation</div>
<div class="t" style="left:943px;top:367px">Scale <u>H</u>eight</div>
<div class="t" style="left:943px;top:394px">Scale <u>W</u>idth</div>
<div class="inp" style="top:283px">4.72"<svg class="a" style="left:60px;top:0" width="8" height="20"><use href="#spin"/></svg></div>
<div class="inp" style="top:310px">6.82"<svg class="a" style="left:60px;top:0" width="8" height="20"><use href="#spin"/></svg></div>
<div class="inp" style="top:337px">0°<svg class="a" style="left:60px;top:0" width="8" height="20"><use href="#spin"/></svg></div>
<div class="inp" style="top:364px">32%<svg class="a" style="left:60px;top:0" width="8" height="20"><use href="#spin"/></svg></div>
<div class="inp" style="top:391px">32%<svg class="a" style="left:60px;top:0" width="8" height="20"><use href="#spin"/></svg></div>
<div class="ck" style="left:943px;top:418px"><svg class="a" style="left:-1px;top:-1px" width="13" height="13"><use href="#tick"/></svg></div>
<div class="t" style="left:961px;top:418px">Lock <u>a</u>spect ratio</div>
<div class="ck" style="left:943px;top:443px"><svg class="a" style="left:-1px;top:-1px" width="13" height="13"><use href="#tick"/></svg></div>
<div class="t" style="left:961px;top:443px"><u>R</u>elative to original picture size</div>
<div class="un" style="left:943px;top:468px"></div>
<div class="t" style="left:961px;top:468px"><u>B</u>est scale for slide show</div>
<div class="t" style="left:953px;top:496px">Res<u>o</u>lution</div>
<div style="left:1067px;top:492px;width:91px;height:21px;box-sizing:border-box;background:#ededed;border:1px solid #d8d8d8"></div>
<div class="t" style="left:1073px;top:495px;color:#bbb;font-size:11.500px">640 x 480</div>
<svg class="a" style="left:1145px;top:501px" width="8" height="5"><path d="M0 0h8L4 5z" fill="#aaa"/></svg>
<div class="t" style="left:943px;top:520px">Original size</div>
<div class="t" style="left:953px;top:542px">Height:</div>
<div class="t" style="left:1003px;top:542px">14.75"</div>
<div class="t" style="left:1046px;top:542px">Width:</div>
<div class="t" style="left:1092px;top:542px">21.33"</div>
<div style="left:953px;top:563px;width:46px;height:24px;box-sizing:border-box;background:#fff;border:1px solid #888;text-align:center;line-height:23px">Re<u>s</u>et</div>

<svg class="a" style="left:929px;top:610px" width="9" height="6"><path d="M1 1l3.500 3.500L8 1" fill="none" stroke="#444"/></svg>
<div class="t" style="left:944px;top:605px;font-weight:bold;letter-spacing:-.2px">Position</div>
<div class="t" style="left:943px;top:631px">H<u>o</u>rizontal position</div>
<div class="inp" style="top:627px">3.16"<svg class="a" style="left:60px;top:0" width="8" height="20"><use href="#spin"/></svg></div>
<div class="t" style="left:1007px;top:657px"><u>F</u>rom</div>
<div class="sel" style="top:654px">Top Left Corner<svg class="a" style="left:98px;top:7px" width="8" height="5"><use href="#tri"/></svg></div>
<div class="t" style="left:943px;top:685px"><u>V</u>ertical position</div>
<div class="inp" style="top:681px">1.28"<svg class="a" style="left:60px;top:0" width="8" height="20"><use href="#spin"/></svg></div>
<div class="t" style="left:1007px;top:711px">F<u>r</u>om</div>
<div class="sel" style="top:708px">Top Left Corner<svg class="a" style="left:98px;top:7px" width="8" height="5"><use href="#tri"/></svg></div>
<svg class="a" style="left:931px;top:749px" width="6" height="10"><use href="#chev"/></svg>
<div class="t" style="left:944px;top:747px;font-weight:bold;letter-spacing:-.2px">Text Box</div>

<!-- red annotations -->
<svg class="a" style="left:0;top:0" width="1187" height="894" viewBox="0 0 1187 894" fill="none" stroke="#c4202a" stroke-width="4.2" stroke-linecap="round" stroke-linejoin="round">
<path d="M915 24C960 22 1040 26 1050 30C1080 33 1120 31 1139 32C1146 36 1150 70 1154 90C1157 110 1155 128 1153 131C1140 142 1090 142 1050 142C1010 142 960 146 935 139C926 135 925 125 923 110C921 90 914 60 913 30C913 25 914 24 915 24Z"/>
<path d="M910 591C915 600 917 620 917 650C917 690 917 730 919 755C923 765 930 765 960 764C1030 766 1100 760 1180 756C1184 752 1182 720 1180 690C1177 650 1174 610 1170 597C1166 592 1150 593 1120 594C1080 596 1040 605 1010 603C980 598 950 597 918 596"/>
</svg>
</div>
</body></html>
